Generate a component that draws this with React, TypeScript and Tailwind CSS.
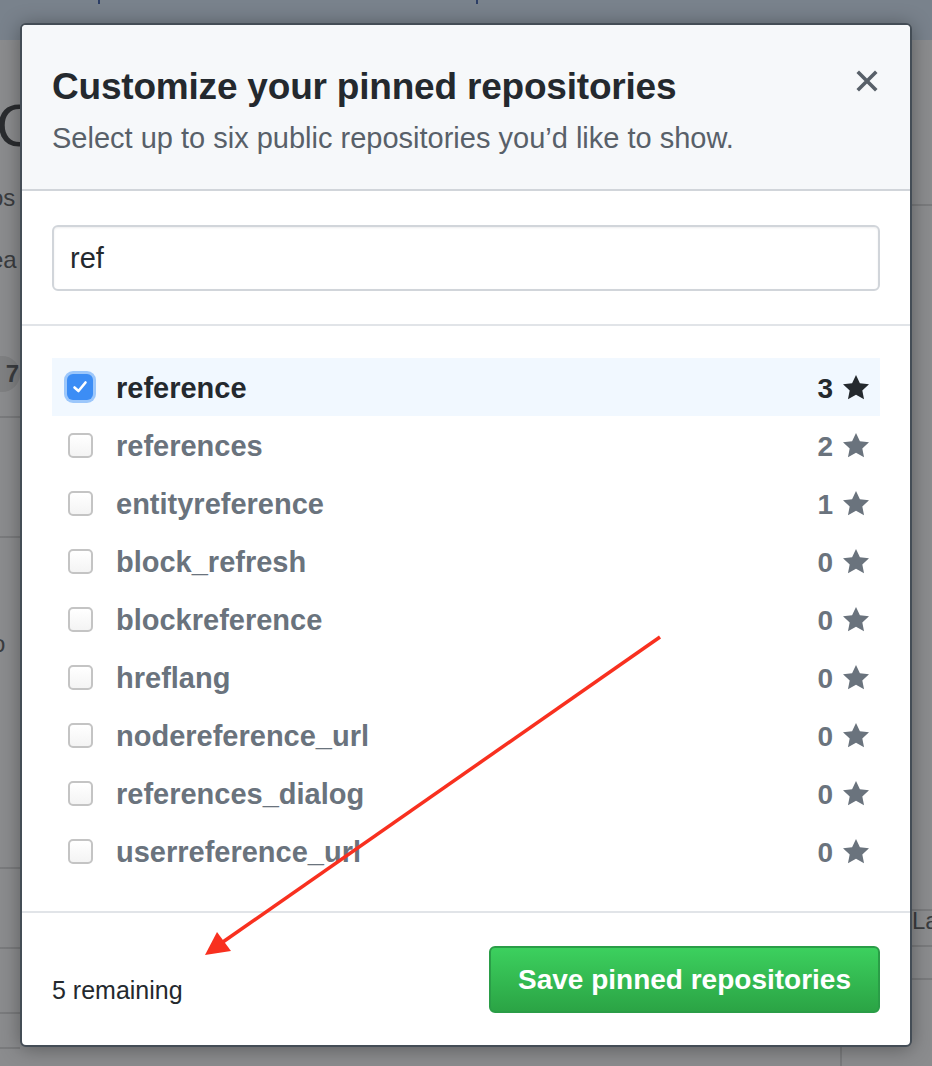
import React from "react";

const repos: { name: string; stars: number; checked?: boolean }[] = [
  { name: "reference", stars: 3, checked: true },
  { name: "references", stars: 2 },
  { name: "entityreference", stars: 1 },
  { name: "block_refresh", stars: 0 },
  { name: "blockreference", stars: 0 },
  { name: "hreflang", stars: 0 },
  { name: "nodereference_url", stars: 0 },
  { name: "references_dialog", stars: 0 },
  { name: "userreference_url", stars: 0 },
];

function Star({ color }: { color: string }) {
  return (
    <svg width="26" height="25" viewBox="0 1 14 13.4" aria-hidden="true">
      <path
        d="M14 6l-4.9-.64L7 1 4.9 5.36 0 6l3.6 3.26L2.67 14 7 11.67 11.33 14l-.93-4.74L14 6z"
        fill={color}
      />
    </svg>
  );
}

function Checkbox({ checked }: { checked?: boolean }) {
  if (checked) {
    return (
      <div className="w-[26px] h-[26px] rounded-[6px] bg-[#3c8df5] shadow-[0_0_0_3px_#9cc7fb] flex items-center justify-center">
        <svg width="16" height="14" viewBox="0 0 16 14">
          <path d="M2.5 7.5 L6.5 11 L13.5 2.5" stroke="#fff" strokeWidth="2.6" fill="none" strokeLinecap="round" strokeLinejoin="round" />
        </svg>
      </div>
    );
  }
  return (
    <div className="w-[25px] h-[25px] rounded-[5px] border-2 border-[#c4c4c4] bg-gradient-to-b from-white to-[#f4f4f4]" />
  );
}

export default function App() {
  return (
    <div
      className="relative w-[932px] h-[1066px] overflow-hidden bg-[#8b8c8e]"
      style={{ fontFamily: '"Liberation Sans", Arial, sans-serif' }}
    >
      {/* Dimmed page underneath */}
      <div className="h-[40px] bg-[#79828c] flex gap-[88px] pl-[98px]">
        <div className="w-[2px] h-[4px] bg-[#2c3e66]" />
        <div className="w-[2px] h-[4px] bg-[#2c3e66] ml-[288px]" />
      </div>
      <div className="flex h-[1026px]">
        <div className="w-[20px] flex flex-col text-[#2a2c2f]">
          <div className="mt-[56px] text-[60px] leading-[60px] -ml-[4px]">C</div>
          <div className="mt-[28px] text-[24px] leading-[28px] -ml-[10px] text-[#3a3c3f]">os</div>
          <div className="mt-[34px] text-[24px] leading-[28px] -ml-[10px] text-[#3a3c3f]">ea</div>
          <div className="mt-[82px] ml-[-16px] w-[36px] h-[36px] rounded-full bg-[#7f8082] text-[24px] font-bold leading-[36px] text-right pr-[1px] text-[#3a3c3f]">7</div>
          <div className="mt-[24px] h-[2px] bg-[#7a7b7d]" />
          <div className="mt-[118px] h-[2px] bg-[#7a7b7d]" />
          <div className="mt-[88px] text-[24px] -ml-[8px] text-[#3a3c3f]">o</div>
          <div className="mt-[205px] h-[2px] bg-[#7a7b7d]" />
          <div className="mt-[78px] h-[2px] bg-[#7a7b7d]" />
          <div className="mt-[63px] h-[2px] bg-[#7a7b7d]" />
          <div className="mt-[33px] h-[2px] bg-[#7a7b7d]" />
        </div>
        <div className="flex-1 flex flex-col">
          <div className="flex-1" />
          <div className="h-[19px] flex justify-end pr-[70px]">
            <div className="w-[2px] h-full bg-[#7a7b7d]" />
          </div>
        </div>
        <div className="w-[20px] flex flex-col">
          <div className="mt-[164px] h-[2px] bg-[#7a7b7d]" />
          <div className="mt-[703px] h-[2px] bg-[#7a7b7d]" />
          <div className="text-[24px] leading-[28px] text-[#3a3c3f] -mt-[4px]">La</div>
          <div className="mt-[10px] h-[2px] bg-[#7a7b7d]" />
          <div className="mt-[31px] h-[2px] bg-[#7a7b7d]" />
        </div>
      </div>

      {/* Dialog */}
      <div className="absolute left-[20px] top-[23px] w-[892px] h-[1024px] bg-white border-2 border-[#444d56] rounded-[6px] shadow-[0_2px_20px_rgba(0,0,0,0.35)] overflow-hidden flex flex-col">
        <div className="h-[166px] bg-[#f6f8fa] border-b-2 border-[#d1d5da] px-[30px] pt-[40px] flex justify-between">
          <div className="flex flex-col">
            <h1 className="text-[37px] leading-[44px] font-bold text-[#24292e] tracking-[-0.2px]">
              Customize your pinned repositories
            </h1>
            <p className="mt-[11px] text-[29px] leading-[36px] text-[#586069]">
              Select up to six public repositories you’d like to show.
            </p>
          </div>
          <div className="mt-[4px] mr-[1px] w-[24px] h-[24px] flex items-center justify-center">
            <svg width="22" height="22" viewBox="0 0 22 22">
              <path d="M3 3 L19 19 M19 3 L3 19" stroke="#586069" strokeWidth="3.6" strokeLinecap="square" />
            </svg>
          </div>
        </div>

        <div className="px-[30px] pt-[34px] pb-[33px] border-b-2 border-[#e1e4e8]">
          <div className="h-[66px] rounded-[6px] border-2 border-[#d1d5da] bg-white flex items-center pl-[16px] shadow-[inset_0_1px_2px_rgba(27,31,35,0.075)]">
            <span className="text-[29px] text-[#24292e] pt-[2px]">ref</span>
          </div>
        </div>

        <div className="px-[30px] pt-[32px] pb-[31px] border-b-2 border-[#e1e4e8] flex flex-col">
          {repos.map((r) => (
            <div
              key={r.name}
              className={`h-[58px] flex items-center pl-[15px] pr-[11px] ${r.checked ? "bg-[#f1f8ff]" : ""}`}
            >
              <div className="w-[26px] flex justify-center">
                <Checkbox checked={r.checked} />
              </div>
              <span
                className={`ml-[23px] pt-[3px] flex-1 text-[29px] font-bold ${r.checked ? "text-[#24292e]" : "text-[#6a737d]"}`}
              >
                {r.name}
              </span>
              <span
                className={`pt-[3px] text-[28px] font-bold ${r.checked ? "text-[#24292e]" : "text-[#6a737d]"}`}
              >
                {r.stars}
              </span>
              <span className="ml-[10px] flex items-center">
                <Star color={r.checked ? "#24292e" : "#6a737d"} />
              </span>
            </div>
          ))}
        </div>

        <div className="flex-1 px-[30px] pt-[33px] flex justify-between items-start">
          <span className="mt-[28px] text-[25px] leading-[32px] text-[#24292e]">5 remaining</span>
          <button className="w-[391px] h-[67px] rounded-[6px] border-2 border-[#2a9d47] bg-gradient-to-b from-[#3cd05e] to-[#2ba445] text-white text-[28px] font-bold">
            Save pinned repositories
          </button>
        </div>
      </div>

      {/* Red annotation arrow */}
      <svg className="absolute left-0 top-0 pointer-events-none" width="932" height="1066">
        <line x1="660" y1="637" x2="220" y2="944" stroke="#f8301f" strokeWidth="3.5" />
        <polygon points="205,955 217,932 231,951" fill="#f8301f" />
      </svg>
    </div>
  );
}
